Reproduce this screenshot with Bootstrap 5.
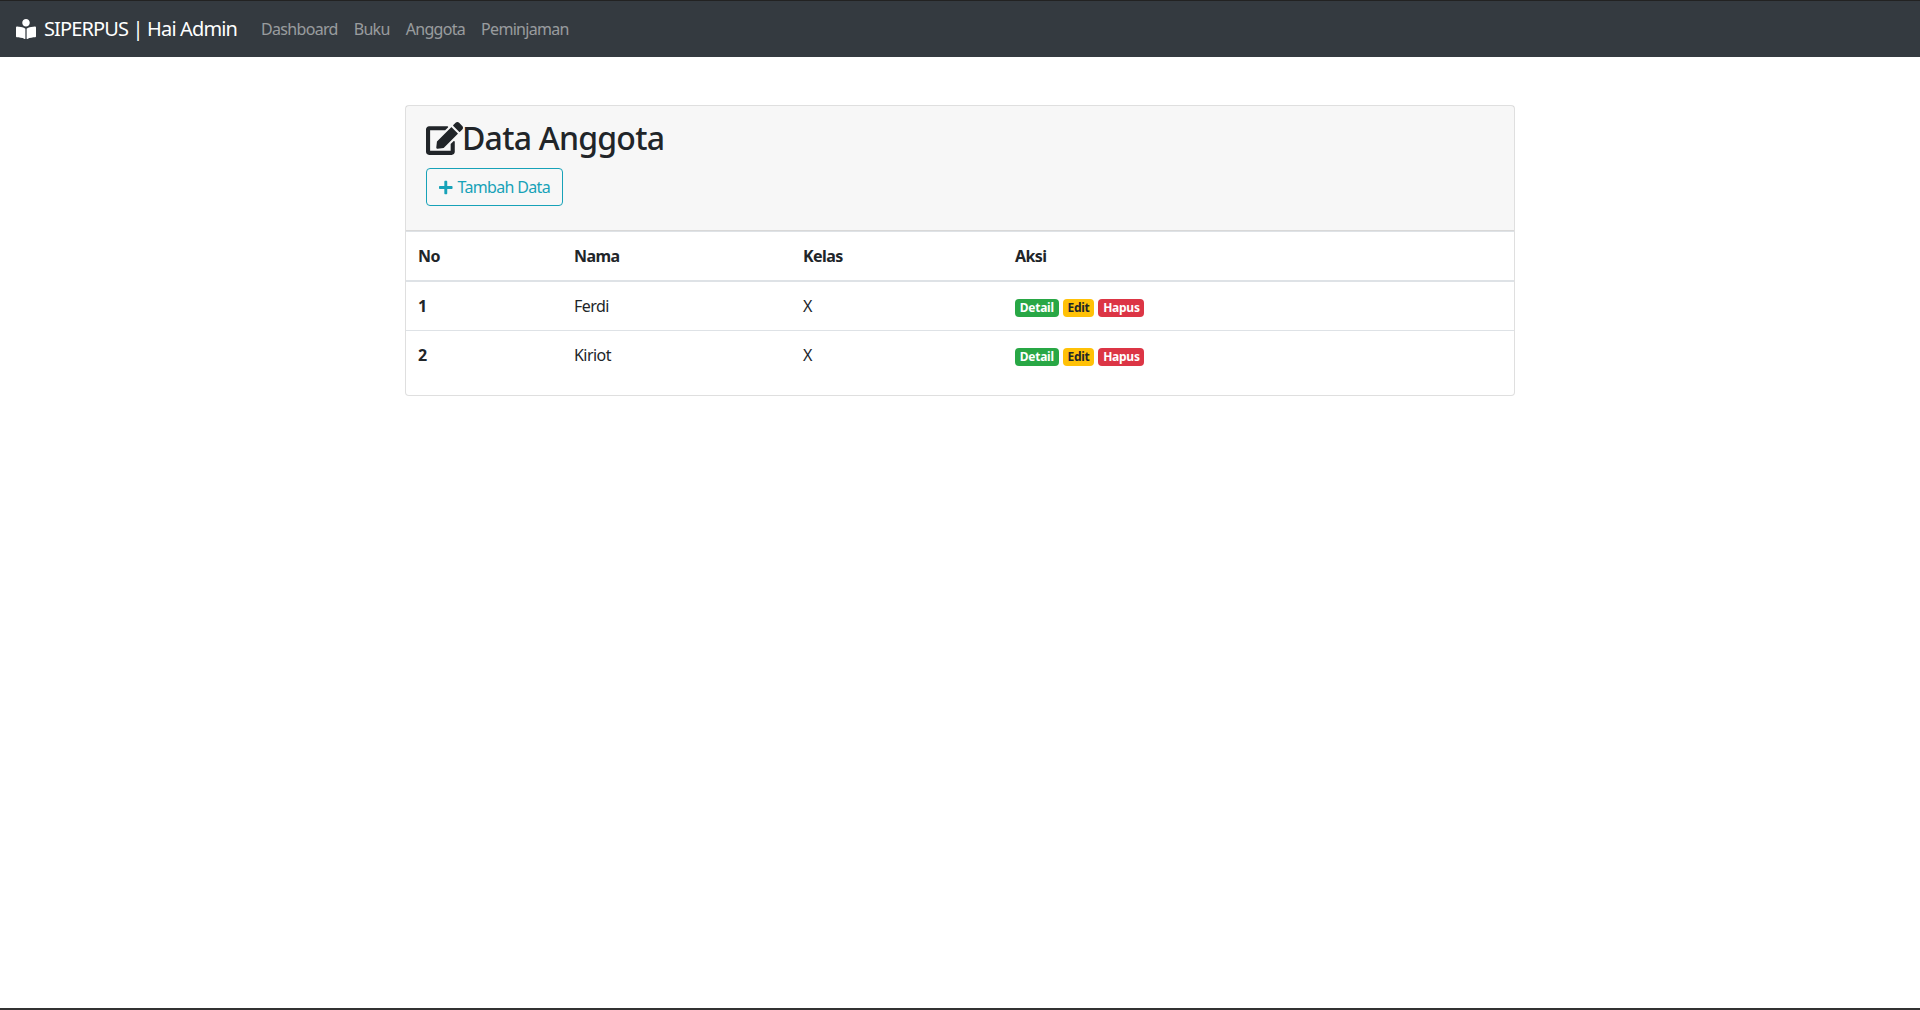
<!doctype html>
<html lang="id">
<head>
<meta charset="utf-8">
<title>SIPERPUS</title>
<link href="https://cdn.jsdelivr.net/npm/bootstrap@5.3.0/dist/css/bootstrap.min.css" rel="stylesheet">
<style>
html,body{height:100%}
body{font-family:"Noto Sans","Open Sans",sans-serif;font-size:16px;line-height:1.5;color:#212529;background:#fff;border-top:1px solid #222;border-bottom:2px solid #333;letter-spacing:-.035em}
.top-nav{background:#343a40;height:56px;padding:8px 16px}
.top-nav .navbar-brand{color:#fff;font-size:20px;margin-right:16px;padding:5px 0;line-height:30px;display:flex;align-items:center;gap:7px;letter-spacing:-.043em}
.top-nav .nav-link{color:rgba(255,255,255,.5);padding:8px;letter-spacing:-.043em}
.brand-ico{width:22px;height:20px;fill:#fff;margin-left:-1px}
.page-wrap{width:1140px;margin:48px auto 0;padding:0 15px}
.data-panel{border:1px solid rgba(0,0,0,.125);border-radius:4px;--bs-card-border-color:rgba(0,0,0,.125)}
.panel-head{background:rgba(0,0,0,.03);padding:12px 20px;border-bottom:1px solid rgba(0,0,0,.125);height:125px}
.panel-title{font-size:32px;font-weight:500;line-height:40px;margin:0 0 10px;display:flex;align-items:center;letter-spacing:-.024em}
.title-ico{width:37px;height:33px;fill:#212529;margin-right:-1px}
.add-btn{color:#17a2b8;border:1px solid #17a2b8;border-radius:4px;padding:6px 12px;height:38px;width:137px;background:transparent;display:flex;align-items:center;gap:5px;white-space:nowrap;line-height:24px;letter-spacing:-.042em}
.plus-ico{width:15px;height:17px;fill:#17a2b8}
.data-table{margin:0 0 16px;table-layout:fixed;--bs-table-border-color:#dee2e6}
.data-table th,.data-table td{padding:12px;line-height:24px;vertical-align:top;border-bottom:0;border-top:1px solid #dee2e6}
.data-table thead th{border-top:1px solid #dee2e6;border-bottom:2px solid #dee2e6}
.data-table tbody tr:first-child td,.data-table tbody tr:first-child th{border-top:0}
.c-no{width:156px}.c-nama{width:229px}.c-kelas{width:212px}
.act-tag{display:inline-block;font-size:12px;font-weight:700;line-height:12px;padding:3px 4.8px;border-radius:4px;vertical-align:baseline;margin-right:.5px;letter-spacing:-.022em}
.tag-green{background:#28a745;color:#fff}
.tag-yellow{background:#ffc107;color:#212529}
.tag-red{background:#dc3545;color:#fff}
</style>
</head>
<body class="d-flex flex-column">
<nav class="navbar top-nav navbar-expand-lg">
  <a class="navbar-brand" href="#"><svg class="brand-ico" viewBox="0 0 512 512"><path d="M352 96c0-53.02-42.98-96-96-96s-96 42.98-96 96 42.98 96 96 96 96-42.98 96-96zM233.59 241.1c-59.33-36.32-155.43-46.3-203.79-49.05C13.55 191.13 0 203.51 0 219.14v222.8c0 14.33 11.59 26.28 26.49 27.05 43.66 2.29 131.99 10.68 193.04 41.43 9.37 4.72 20.48-1.71 20.48-11.87V252.56c-.01-4.67-2.32-8.95-6.42-11.46zm248.61-49.05c-48.35 2.74-144.46 12.73-203.78 49.05-4.1 2.51-6.41 6.96-6.41 11.63v245.79c0 10.19 11.14 16.63 20.54 11.9 61.04-30.72 149.32-39.11 192.97-41.4 14.9-.78 26.49-12.73 26.49-27.06V219.14c-.01-15.63-13.56-28.01-29.81-27.09z"/></svg>SIPERPUS | Hai Admin</a>
  <ul class="navbar-nav flex-row">
    <li class="nav-item"><a class="nav-link" href="#">Dashboard</a></li>
    <li class="nav-item"><a class="nav-link" href="#">Buku</a></li>
    <li class="nav-item"><a class="nav-link" href="#">Anggota</a></li>
    <li class="nav-item"><a class="nav-link" href="#">Peminjaman</a></li>
  </ul>
</nav>
<main class="page-wrap">
  <div class="card data-panel">
    <div class="panel-head">
      <h3 class="panel-title"><svg class="title-ico" viewBox="0 0 576 512"><path d="M402.6 83.2l90.2 90.2c3.8 3.8 3.8 10 0 13.8L274.4 405.6l-92.8 10.3c-12.4 1.4-22.9-9.1-21.5-21.5l10.3-92.8L388.8 83.2c3.8-3.8 10-3.8 13.8 0zm162-22.9l-48.8-48.8c-15.2-15.2-39.9-15.2-55.2 0l-35.4 35.4c-3.8 3.8-3.8 10 0 13.8l90.2 90.2c3.8 3.8 10 3.8 13.8 0l35.4-35.4c15.2-15.3 15.2-40 0-55.2zM384 346.2V448H64V128h229.8c3.2 0 6.2-1.3 8.5-3.5l40-40c7.6-7.6 2.2-20.5-8.5-20.5H48C21.5 64 0 85.5 0 112v352c0 26.5 21.5 48 48 48h352c26.5 0 48-21.5 48-48V306.2c0-10.7-12.9-16-20.5-8.5l-40 40c-2.2 2.3-3.5 5.3-3.5 8.5z"/></svg>Data Anggota</h3>
      <a class="add-btn text-decoration-none" href="#"><svg class="plus-ico" viewBox="0 0 448 512"><path d="M416 208H272V64c0-17.67-14.33-32-32-32h-32c-17.67 0-32 14.33-32 32v144H32c-17.67 0-32 14.33-32 32v32c0 17.67 14.33 32 32 32h144v144c0 17.67 14.33 32 32 32h32c17.67 0 32-14.33 32-32V304h144c17.67 0 32-14.33 32-32v-32c0-17.67-14.33-32-32-32z"/></svg>Tambah Data</a>
    </div>
    <table class="table data-table">
      <thead><tr><th class="c-no">No</th><th class="c-nama">Nama</th><th class="c-kelas">Kelas</th><th>Aksi</th></tr></thead>
      <tbody>
        <tr><th>1</th><td>Ferdi</td><td>X</td><td><a class="act-tag tag-green text-decoration-none" href="#">Detail</a> <a class="act-tag tag-yellow text-decoration-none" href="#">Edit</a> <a class="act-tag tag-red text-decoration-none" href="#">Hapus</a></td></tr>
        <tr><th>2</th><td>Kiriot</td><td>X</td><td><a class="act-tag tag-green text-decoration-none" href="#">Detail</a> <a class="act-tag tag-yellow text-decoration-none" href="#">Edit</a> <a class="act-tag tag-red text-decoration-none" href="#">Hapus</a></td></tr>
      </tbody>
    </table>
  </div>
</main>
<script src="https://cdn.jsdelivr.net/npm/bootstrap@5.3.0/dist/js/bootstrap.bundle.min.js"></script>
</body>
</html>
